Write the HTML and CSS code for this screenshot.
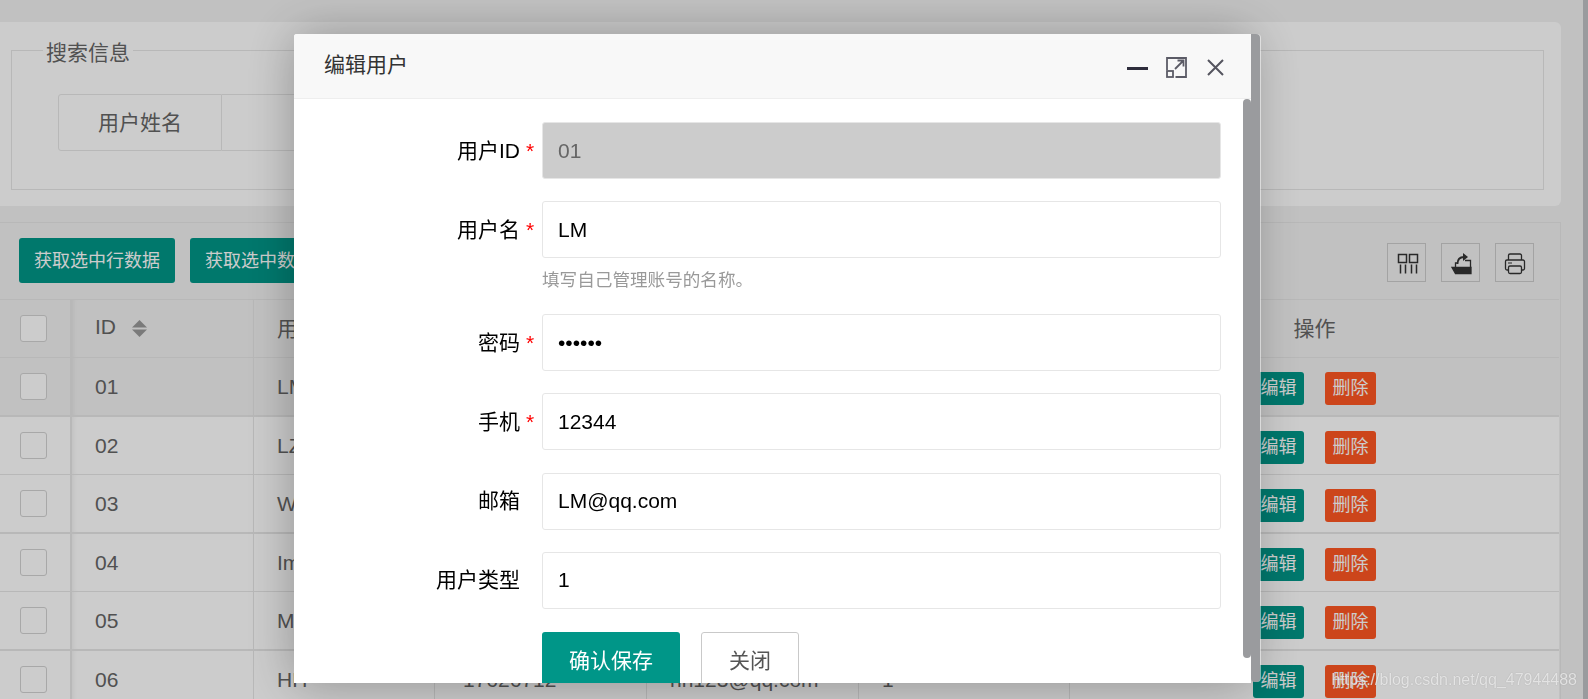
FILE: index.html
```html
<!DOCTYPE html>
<html lang="zh-CN">
<head>
    <meta charset="UTF-8">
    <meta name="viewport" content="width=device-width, initial-scale=1.0">
    <title>用户管理</title>
    <link rel="stylesheet" href="styles.css">
</head>
<body>

    <div class="window">
        <div class="page">
            <div class="search-panel">
                <fieldset class="search-box">
                    <legend>搜索信息</legend>
                    <div class="input-group">
                        <label class="input-group-label">用户姓名</label>
                        <input class="input-group-field" type="text">
                    </div>
                </fieldset>
            </div>

            <div class="table-panel">
                <div class="toolbar">
                    <button class="btn-teal" type="button">获取选中行数据</button>
                    <button class="btn-teal" type="button">获取选中数据数目</button>
                    <div class="tool-icons">
                        <span class="tool-icon">
                            <svg width="39" height="39" viewBox="0 0 39 39" fill="none" stroke="#333" stroke-width="1.5">
                                <rect x="11.5" y="11.5" width="8" height="8"/>
                                <rect x="22.5" y="11.5" width="8" height="8"/>
                                <path d="M13.5 21.5v9M18.5 21.5v9M24.5 21.5v9M29.5 21.5v9"/>
                            </svg>
                        </span>
                        <span class="tool-icon">
                            <svg width="39" height="39" viewBox="0 0 39 39" fill="none" stroke="#333" stroke-width="1.3">
                                <path d="M11 24.5h19v6H14.5z" fill="#333"/>
                                <path d="M14.5 24v-4h2M24 17.5h5.500v7"/>
                                <path d="M16.500 21c0-4.500 2.500-7 6.500-7" stroke-width="1.800"/>
                                <path d="M22 10l5 4-5 4z" fill="#333" stroke="none"/>
                            </svg>
                        </span>
                        <span class="tool-icon">
                            <svg width="39" height="39" viewBox="0 0 39 39" fill="none" stroke="#333" stroke-width="1.3">
                                <path d="M13.500 17v-4.500a1.500 1.500 0 0 1 1.500-1.500h10a1.500 1.500 0 0 1 1.500 1.500V17"/>
                                <path d="M13.500 27H12a1.500 1.500 0 0 1-1.500-1.500v-7A1.500 1.500 0 0 1 12 17h16a1.500 1.500 0 0 1 1.500 1.500v7A1.500 1.500 0 0 1 28 27h-1.500"/>
                                <rect x="13.500" y="23" width="13" height="7.500" rx="1.500"/>
                                <path d="M13 20h4" stroke-width="1"/>
                            </svg>
                        </span>
                    </div>
                </div>

                <table class="user-table">
                    <colgroup>
                        <col class="col-check">
                        <col class="col-id">
                        <col class="col-name">
                        <col class="col-phone">
                        <col class="col-mail">
                        <col class="col-type">
                        <col class="col-action">
                    </colgroup>
                    <thead>
                        <tr>
                            <th class="cell-check"><input class="checkbox" type="checkbox"></th>
                            <th class="cell-id">ID
                                <svg class="sort-icon" width="15" height="17" viewBox="0 0 15 17" fill="#999">
                                    <path d="M7.500 0L15 7.500H0z"/>
                                    <path d="M0 9.500h15L7.500 17z"/>
                                </svg>
                            </th>
                            <th>用户名</th>
                            <th>手机</th>
                            <th>邮箱</th>
                            <th>类型</th>
                            <th class="cell-action">操作</th>
                        </tr>
                    </thead>
                    <tbody>
                        <tr class="row-hover">
                            <td class="cell-check"><input class="checkbox" type="checkbox"></td>
                            <td class="cell-id">01</td>
                            <td>LM</td>
                            <td class="cell-phone">12344</td>
                            <td>LM@qq.com</td>
                            <td>1</td>
                            <td class="cell-action"><button class="btn-small btn-edit" type="button">编辑</button><button class="btn-small btn-delete" type="button">删除</button></td>
                        </tr>
                        <tr>
                            <td class="cell-check"><input class="checkbox" type="checkbox"></td>
                            <td class="cell-id">02</td>
                            <td>LZ</td>
                            <td class="cell-phone">17626701</td>
                            <td>lz123@qq.com</td>
                            <td>1</td>
                            <td class="cell-action"><button class="btn-small btn-edit" type="button">编辑</button><button class="btn-small btn-delete" type="button">删除</button></td>
                        </tr>
                        <tr>
                            <td class="cell-check"><input class="checkbox" type="checkbox"></td>
                            <td class="cell-id">03</td>
                            <td>WX</td>
                            <td class="cell-phone">17626702</td>
                            <td>wx123@qq.com</td>
                            <td>1</td>
                            <td class="cell-action"><button class="btn-small btn-edit" type="button">编辑</button><button class="btn-small btn-delete" type="button">删除</button></td>
                        </tr>
                        <tr>
                            <td class="cell-check"><input class="checkbox" type="checkbox"></td>
                            <td class="cell-id">04</td>
                            <td>Im</td>
                            <td class="cell-phone">17626704</td>
                            <td>im123@qq.com</td>
                            <td>1</td>
                            <td class="cell-action"><button class="btn-small btn-edit" type="button">编辑</button><button class="btn-small btn-delete" type="button">删除</button></td>
                        </tr>
                        <tr>
                            <td class="cell-check"><input class="checkbox" type="checkbox"></td>
                            <td class="cell-id">05</td>
                            <td>MK</td>
                            <td class="cell-phone">17626705</td>
                            <td>mk123@qq.com</td>
                            <td>1</td>
                            <td class="cell-action"><button class="btn-small btn-edit" type="button">编辑</button><button class="btn-small btn-delete" type="button">删除</button></td>
                        </tr>
                        <tr>
                            <td class="cell-check"><input class="checkbox" type="checkbox"></td>
                            <td class="cell-id">06</td>
                            <td>HH</td>
                            <td class="cell-phone">17626712</td>
                            <td>hh123@qq.com</td>
                            <td>1</td>
                            <td class="cell-action"><button class="btn-small btn-edit" type="button">编辑</button><button class="btn-small btn-delete" type="button">删除</button></td>
                        </tr>
                    </tbody>
                </table>
            </div>
        </div>
        <div class="page-scrollbar"></div>
    </div>

    <div class="shade"></div>

    <div class="modal">
        <div class="modal-header">
            <span class="modal-title">编辑用户</span>
            <div class="modal-controls">
                <svg width="21" height="21" viewBox="0 0 21 21">
                    <rect x="0" y="10" width="21" height="3" fill="#2e2d3c"/>
                </svg>
                <svg width="21" height="21" viewBox="0 0 21 21" fill="none" stroke="#5b5b66" stroke-width="1.800">
                    <path d="M1 13V1h19v19H9.500"/>
                    <rect x="1" y="14" width="6" height="6"/>
                    <path d="M9 12l8-8M11.500 3.500h6v6"/>
                </svg>
                <svg width="21" height="21" viewBox="0 0 21 21" fill="none" stroke="#55555f" stroke-width="2">
                    <path d="M3 3l15 15M18 3L3 18"/>
                </svg>
            </div>
        </div>

        <form class="modal-body">
            <div class="form-group">
                <div class="form-row">
                    <label class="form-label" for="userId">用户ID<span class="star">*</span></label>
                    <input class="form-input" id="userId" type="text" value="01" disabled>
                </div>
            </div>
            <div class="form-group">
                <div class="form-row">
                    <label class="form-label" for="userName">用户名<span class="star">*</span></label>
                    <input class="form-input" id="userName" type="text" value="LM">
                </div>
                <div class="form-help">填写自己管理账号的名称。</div>
            </div>
            <div class="form-group">
                <div class="form-row">
                    <label class="form-label" for="userPwd">密码<span class="star">*</span></label>
                    <input class="form-input" id="userPwd" type="password" value="123456">
                </div>
            </div>
            <div class="form-group">
                <div class="form-row">
                    <label class="form-label" for="userPhone">手机<span class="star">*</span></label>
                    <input class="form-input" id="userPhone" type="text" value="12344">
                </div>
            </div>
            <div class="form-group">
                <div class="form-row">
                    <label class="form-label" for="userMail">邮箱<span class="star"></span></label>
                    <input class="form-input" id="userMail" type="text" value="LM@qq.com">
                </div>
            </div>
            <div class="form-group">
                <div class="form-row">
                    <label class="form-label" for="userType">用户类型<span class="star"></span></label>
                    <input class="form-input" id="userType" type="text" value="1">
                </div>
            </div>
            <div class="form-actions">
                <button class="btn-save" type="button">确认保存</button>
                <button class="btn-close" type="button">关闭</button>
            </div>
        </form>

        <div class="modal-scroll-inner"></div>
    </div>
    <div class="modal-scroll-outer"></div>

    <div class="watermark">https://blog.csdn.net/qq_47944488</div>

</body>
</html>
```

FILE: styles.css
```css
* {
    box-sizing: border-box;
}
html, body {
    height: 100%;
    margin: 0;
    overflow: hidden;
}
body {
    font-family: "Liberation Sans", "Noto Sans CJK SC", sans-serif;
    font-size: 21px;
    color: #666;
    background-color: #f2f2f2;
}
button, input {
    font-family: inherit;
    font-size: inherit;
}
.window {
    display: flex;
    height: 699px;
    overflow: hidden;
}
.page {
    flex: 1;
    padding-top: 22px;
    padding-right: 22px;
    overflow: hidden;
}
.page-scrollbar {
    width: 5px;
    background-color: #c1c2c6;
}

/* search */
.search-panel {
    padding: 14px 17px 16px 11px;
    background-color: #fff;
    border-radius: 0 6px 6px 0;
}
.search-box {
    margin: 0;
    padding: 30px 46px 38px;
    border: 1px solid #e6e6e6;
}
.search-box legend {
    height: 28px;
    margin-left: -15px;
    padding: 0 3px;
    line-height: 34px;
}
.input-group {
    display: flex;
    width: 600px;
    height: 57px;
}
.input-group-label {
    width: 164px;
    line-height: 55px;
    text-align: center;
    border: 1px solid #e6e6e6;
    border-radius: 3px 0 0 3px;
}
.input-group-field {
    flex: 1;
    border: 1px solid #e6e6e6;
    border-left: none;
    background-color: #fff;
}

/* table */
.table-panel {
    margin-top: 16px;
    border-top: 1px solid #e6e6e6;
    border-right: 1px solid #e6e6e6;
}
.toolbar {
    display: flex;
    align-items: center;
    height: 76px;
    padding: 0 26px 1px 19px;
    gap: 15px;
}
.btn-teal {
    height: 45px;
    padding: 0 15px 3px;
    font-size: 18px;
    color: #fff;
    background-color: #009688;
    border: none;
    border-radius: 3px;
}
.tool-icons {
    display: flex;
    gap: 15px;
    margin-top: 4px;
    margin-left: auto;
}
.tool-icon {
    width: 39px;
    height: 39px;
    border: 1px solid #ccc;
}
.tool-icon svg {
    display: block;
    margin: -1px;
}
.user-table {
    width: 1559px;
    table-layout: fixed;
    border-collapse: separate;
    border-spacing: 0;
    border-top: 1px solid #e6e6e6;
    background-color: #fff;
}
.col-check { width: 72px; }
.col-id { width: 182px; }
.col-name { width: 181px; }
.col-phone { width: 212px; }
.col-mail { width: 212px; }
.col-type { width: 211px; }
.user-table th,
.user-table td {
    padding: 0 0 0 23px;
    font-weight: normal;
    text-align: left;
    white-space: nowrap;
    border-right: 1px solid #e6e6e6;
    border-bottom: 1px solid #e6e6e6;
}
.user-table th {
    padding-bottom: 3px;
}
.user-table thead tr {
    height: 58px;
    background-color: #f2f2f2;
}
.user-table tbody tr {
    height: 58px;
}
.user-table tbody tr:nth-child(odd) {
    height: 59px;
}
.user-table tbody tr:nth-child(odd) td {
    border-bottom-width: 2px;
}
.user-table .row-hover {
    background-color: #f2f2f2;
}
.user-table .cell-check {
    padding: 0 0 0 20px;
    border-right-width: 2px;
}
.user-table .cell-id {
    box-shadow: inset 5px 0 5px -4px rgba(0, 0, 0, .07);
}
.user-table .cell-phone {
    padding-left: 28px;
}
.user-table .cell-action {
    padding: 3px 0 0;
    text-align: center;
    border-right: none;
}
.user-table th.cell-action {
    padding: 0 0 4px;
}
.checkbox {
    display: block;
    width: 27px;
    height: 27px;
    margin: 0;
    appearance: none;
    background-color: #fff;
    border: 1px solid #d2d2d2;
    border-radius: 3px;
}
.sort-icon {
    margin-left: 10px;
    vertical-align: -3px;
}
.btn-small {
    width: 51px;
    height: 33px;
    padding: 0 0 4px;
    font-size: 18px;
    color: #fff;
    vertical-align: middle;
    border: none;
    border-radius: 3px;
}
.btn-edit {
    background-color: #009688;
}
.btn-delete {
    margin-left: 21px;
    background-color: #ff5722;
}

/* layer */
.shade {
    position: fixed;
    top: 0;
    right: 0;
    bottom: 0;
    left: 0;
    background-color: rgba(0, 0, 0, .2);
}
.modal {
    position: fixed;
    top: 34px;
    left: 294px;
    width: 957px;
    height: 649px;
    overflow: hidden;
    background-color: #fff;
    border-radius: 3px 0 0 0;
    box-shadow: 1px 1px 50px rgba(0, 0, 0, .3);
}
.modal-header {
    display: flex;
    align-items: center;
    height: 65px;
    padding: 0 25px 0 30px;
    color: #333;
    background-color: #f8f8f8;
    border-bottom: 1px solid #eee;
}
.modal-title {
    padding-bottom: 6px;
}
.modal-controls {
    display: flex;
    gap: 18px;
    margin-left: auto;
    padding-top: 3px;
}
.modal-controls svg {
    display: block;
}
.modal-body {
    padding: 23px 30px 0 0;
}
.form-group {
    margin-bottom: 22.2px;
}
.form-row {
    display: flex;
    height: 57px;
}
.form-label {
    display: flex;
    justify-content: flex-end;
    align-items: center;
    width: 248px;
    padding-bottom: 4px;
    color: #000;
}
.star {
    width: 22px;
    padding-top: 4px;
    padding-left: 6px;
    line-height: 1;
    color: #f00;
}
.form-input {
    flex: 1;
    min-width: 0;
    padding: 0 15px;
    color: #000;
    background-color: #fff;
    border: 1px solid #e6e6e6;
    border-radius: 3px;
    outline: none;
}
.form-input:disabled {
    color: #666;
    background-color: #ccc;
}
.form-help {
    margin-top: 9.8px;
    padding-left: 248px;
    font-size: 17.600px;
    line-height: 24px;
    color: #999;
}
.form-actions {
    display: flex;
    gap: 21px;
    margin-top: 23px;
    margin-left: 248px;
}
.btn-save,
.btn-close {
    height: 58px;
    padding: 0 0 4px;
    border-radius: 3px;
}
.btn-save {
    width: 138px;
    color: #fff;
    background-color: #009688;
    border: none;
}
.btn-close {
    width: 98px;
    color: #555;
    background-color: #fff;
    border: 1px solid #c9c9c9;
}
.modal-scroll-inner {
    position: absolute;
    top: 65px;
    right: 0;
    width: 8px;
    height: 559px;
    background-color: #9a9b9e;
    border-radius: 4px;
}
.modal-scroll-outer {
    position: fixed;
    top: 34px;
    left: 1251px;
    width: 9px;
    height: 648px;
    background-color: #9a9b9e;
    border-radius: 0 4px 4px 4px;
    box-shadow: 1px 0 0 rgba(255, 255, 255, .5);
}
.watermark {
    position: fixed;
    top: 670px;
    right: 11px;
    font-size: 16px;
    line-height: 20px;
    color: rgba(255, 255, 255, .7);
    text-shadow: 0 0 1px rgba(120, 120, 120, .6);
}
```
